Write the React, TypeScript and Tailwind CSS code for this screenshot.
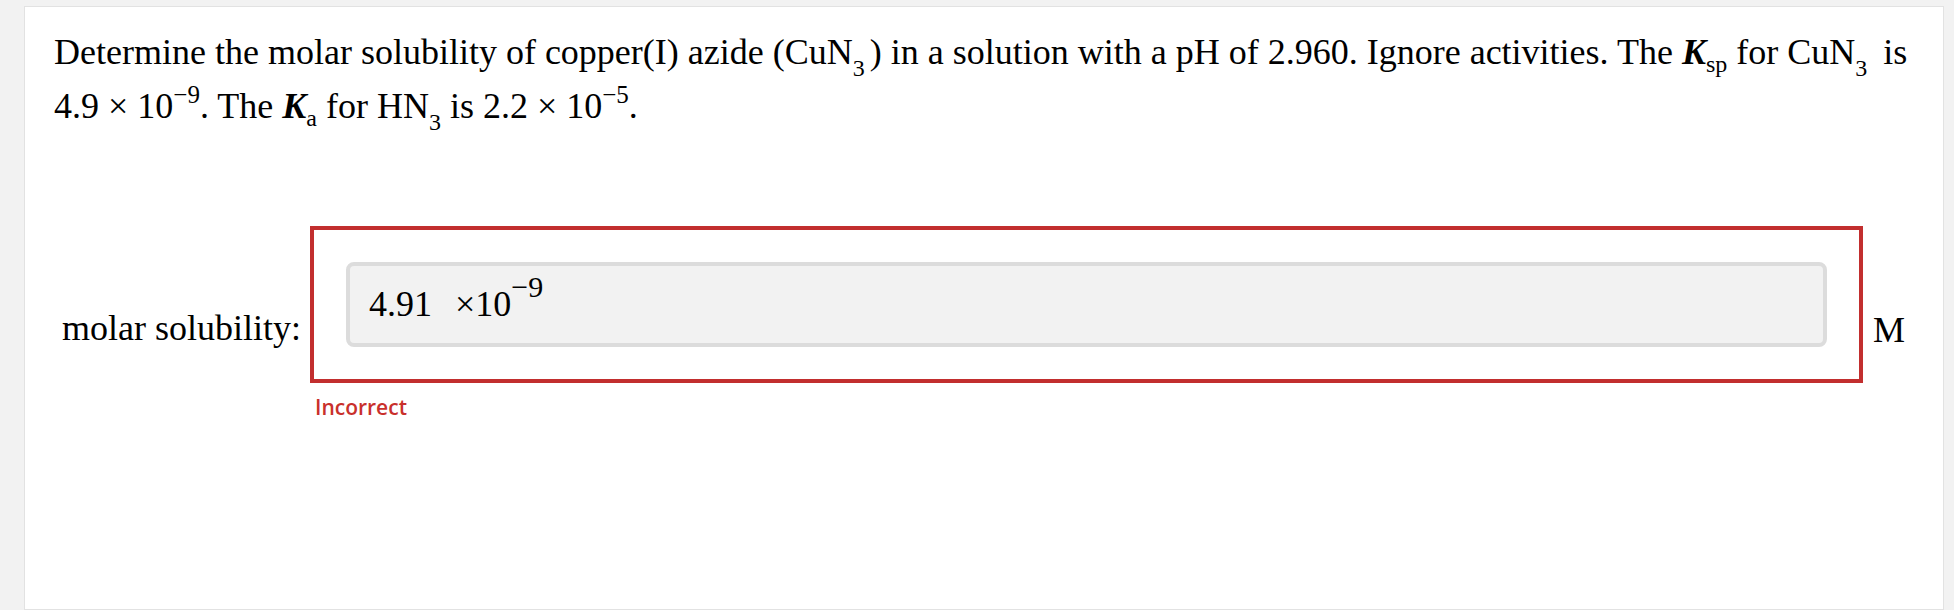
export default function App() {
  const serif = "font-['Liberation_Serif','Times_New_Roman',serif] text-black";
  const sub = "text-[24px] bottom-[-12px]";
  const subSmall = "text-[24px] bottom-[-8px]";
  const sup = "text-[25px] top-[-15px]";

  return (
    <div className="min-h-screen bg-[#f2f2f2] pl-[24px] pr-[10px] pt-[6px]">
      <div className="min-h-[604px] border border-[#e2e2e2] bg-white">
        <div className={`${serif} pl-[29px] pt-[18px] text-[36px] leading-[54px]`}>
          <div className="whitespace-nowrap">
            Determine the molar solubility of copper(I) azide (CuN<sub className={sub}>3</sub>
            <span className="ml-[5px]">)</span> in a solution with a pH of 2.960. Ignore activities. The{" "}
            <i className="font-bold">K</i>
            <sub className={subSmall}>sp</sub> for CuN<sub className={sub}>3</sub>
            <span className="ml-[16px]">is</span>
          </div>
          <div className="whitespace-nowrap">
            4.9 × 10<sup className={sup}>−9</sup>. The <i className="font-bold">K</i>
            <sub className={subSmall}>a</sub> for HN<sub className={sub}>3</sub> is 2.2 × 10
            <sup className={sup}>−5</sup>.
          </div>
        </div>

        <div className="mt-[93px] flex items-start">
          <div className={`${serif} w-[276px] pt-[84px] text-right text-[36px] leading-none`}>
            molar solubility:
          </div>

          <div className="ml-[9px] flex flex-col">
            <div className="h-[157px] w-[1553px] border-4 border-[#c22e2e] p-[32px]">
              <div className="h-[85px] rounded-[8px] border-4 border-[#dcdcdc] bg-[#f2f2f2] pl-[19px] pt-[20px]">
                <span className={`${serif} text-[36px] leading-none`}>
                  4.91<span className="ml-[23px]">×10</span>
                  <sup className="top-[-19px] text-[30px]">−9</sup>
                </span>
              </div>
            </div>
            <div className="ml-[5px] mt-[14px] font-['Open_Sans',sans-serif] text-[21px] leading-none font-semibold text-[#c9302c]">
              Incorrect
            </div>
          </div>

          <div className={`${serif} ml-[10px] pt-[86px] text-[36px] leading-none`}>M</div>
        </div>
      </div>
    </div>
  );
}
